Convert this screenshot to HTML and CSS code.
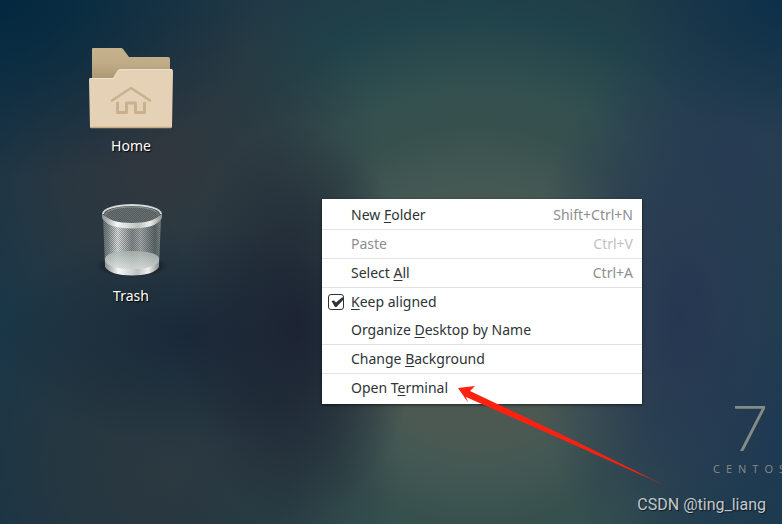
FILE: index.html
```html
<!DOCTYPE html>
<html lang="en">
<head>
    <meta charset="utf-8">
    <title>Desktop</title>
    <link rel="stylesheet" href="styles.css">
</head>
<body>
<div class="desktop">
    <a class="launcher home" href="#home">
        <svg width="88" height="84" viewBox="0 0 88 84">
            <defs>
                <linearGradient id="back" x1="0" y1="0" x2="0" y2="1">
                    <stop offset="0" stop-color="#c5b38e"/>
                    <stop offset=".25" stop-color="#bfac87"/>
                    <stop offset=".55" stop-color="#a99672"/>
                </linearGradient>
            </defs>
            <path d="M5 3q0-1 1-1h28q1 0 2 1l6 8h39q2 0 2 2v50H5z" fill="url(#back)"/>
            <path d="M3 32h23l5-8q1-1 3-1h50q2 0 2 2l-1 56q0 1-2 1H4q-1 0-1-1L2 34q0-2 1-2z" fill="#e4d1b6"/>
            <path d="M3 32.500h23.500l5-8q1-1 3-1H85" fill="none" stroke="#efe0ca"/>
            <path d="M4 81.500h80" stroke="#c6a982" stroke-width="1.500"/>
            <path d="M25 54.500l19-12.500 19 12.500" fill="none" stroke="#c9b190" stroke-width="2.600" stroke-linecap="round" stroke-linejoin="round"/>
            <path d="M30.500 56v10.500h9V57h9v9.500h9V56" fill="none" stroke="#c9b190" stroke-width="3" stroke-linejoin="round"/>
        </svg>
        <span>Home</span>
    </a>
    <a class="launcher trash" href="#trash">
        <svg width="88" height="84" viewBox="0 0 88 84">
            <defs>
                <linearGradient id="can" x1="0" x2="1">
                    <stop offset="0" stop-color="#65716f"/>
                    <stop offset=".1" stop-color="#8d9694"/>
                    <stop offset=".25" stop-color="#dfe2e1"/>
                    <stop offset=".5" stop-color="#858b8b"/>
                    <stop offset=".65" stop-color="#a9adad"/>
                    <stop offset=".9" stop-color="#5d6765"/>
                    <stop offset="1" stop-color="#86918f"/>
                </linearGradient>
                <linearGradient id="rim" x1="0" x2="1">
                    <stop offset="0" stop-color="#8b8f8f"/>
                    <stop offset=".25" stop-color="#f6f6f6"/>
                    <stop offset=".6" stop-color="#bfc1c1"/>
                    <stop offset=".8" stop-color="#efefef"/>
                    <stop offset="1" stop-color="#8b8f8f"/>
                </linearGradient>
                <linearGradient id="floor" x1="0" y1="0" x2="0" y2="1">
                    <stop offset="0" stop-color="#a9b4b1"/>
                    <stop offset="1" stop-color="#e9edeb"/>
                </linearGradient>
                <radialGradient id="shade">
                    <stop offset=".5" stop-color="#080c10" stop-opacity=".7"/>
                    <stop offset="1" stop-color="#080c10" stop-opacity="0"/>
                </radialGradient>
                <pattern id="mesh" width="2" height="2" patternUnits="userSpaceOnUse">
                    <path d="M0 0h1v1H0zM1 1h1v1H1z" fill="#2c3435" opacity=".35"/>
                </pattern>
            </defs>
            <ellipse cx="45" cy="70" rx="37" ry="11" fill="url(#shade)"/>
            <path d="M16 20l2 50q6 8 27 8t27-8l2-50z" fill="url(#can)"/>
            <path d="M16 20l2 50q6 8 27 8t27-8l2-50z" fill="url(#mesh)"/>
            <path d="M18 62q3-7 27-7t27 7v6q-4 7-27 7t-27-7z" fill="url(#floor)" opacity=".8"/>
            <path d="M18 65q5 8 27 8t27-8v6q-6 8.500-27 8.500T18 71z" fill="url(#rim)"/>
            <ellipse cx="45" cy="19" rx="28" ry="9" fill="#697270"/>
            <ellipse cx="45" cy="19" rx="28" ry="9" fill="url(#mesh)"/>
            <path d="M16 18a29 9 0 0 1 58 0" fill="none" stroke="#d6d8d8" stroke-width="2"/>
            <path d="M18.500 19a26.500 8 0 0 1 53 0" fill="none" stroke="#858e8e"/>
            <path d="M15 17v5c4 7 14 10.500 30 10.500S71 29 75 22v-5c-5 7-16 10-30 10s-25-3-30-10z" fill="url(#rim)"/>
        </svg>
        <span>Trash</span>
    </a>

    <div class="brand">
        <div class="version">7</div>
        <div class="distro">CENTOS</div>
    </div>

    <div class="menu">
        <button class="item">
            <span>New <u>F</u>older</span>
            <kbd>Shift+Ctrl+N</kbd>
        </button>
        <hr>
        <button class="item" disabled>
            <span>Paste</span>
            <kbd>Ctrl+V</kbd>
        </button>
        <hr>
        <button class="item">
            <span>Select <u>A</u>ll</span>
            <kbd>Ctrl+A</kbd>
        </button>
        <hr>
        <label class="item check" for="aligned">
            <span class="tick">
                <input type="checkbox" id="aligned" checked>
                <svg width="16" height="16" viewBox="0 0 16 16"><path d="M3.500 7L6 6.500 8 8.500 14 3.500h1V6l-6.500 7H7z" fill="#2e3436"/></svg>
            </span>
            <span><u>K</u>eep aligned</span>
        </label>
        <button class="item"><span>Organize <u>D</u>esktop by Name</span></button>
        <hr>
        <button class="item"><span>Change <u>B</u>ackground</span></button>
        <hr>
        <button class="item"><span>Open T<u>e</u>rminal</span></button>
    </div>

    <svg class="arrow" width="212" height="104" viewBox="0 0 212 104">
        <defs>
            <linearGradient id="tail" x1="0" x2="1">
                <stop offset=".85" stop-color="#ff2010"/>
                <stop offset="1" stop-color="#ff2010" stop-opacity=".2"/>
            </linearGradient>
        </defs>
        <path d="M0 2L17 0l-5 5L113 53 210 101 112 57 8 11l2 5.500z" fill="url(#tail)"/>
    </svg>
    <div class="watermark">CSDN @ting_liang</div>
</div>
</body>
</html>
```

FILE: styles.css
```css
body { margin: 0; font-family: "Noto Sans", sans-serif; font-size: 14px; }

.desktop {
    position: relative;
    min-height: 100vh;
    overflow: hidden;
    background:
        radial-gradient(260px 180px at 0% 0%, #03283f, rgba(3, 40, 63, 0)),
        radial-gradient(160px 140px at 100% 0%, #0d3049, rgba(13, 48, 73, 0)),
        radial-gradient(120px 200px at 38% 62%, rgba(27, 34, 50, .95), rgba(27, 34, 50, .6) 50%, rgba(27, 34, 50, 0)),
        radial-gradient(190px 110px at 24% 64%, rgba(24, 38, 56, .9), rgba(24, 38, 56, 0)),
        radial-gradient(220px 200px at 21% 32%, rgba(50, 54, 61, .95), rgba(48, 54, 61, .6) 50%, rgba(48, 54, 61, 0)),
        radial-gradient(230px 200px at 22% 90%, rgba(44, 56, 64, .95), rgba(40, 54, 62, .7) 50%, rgba(40, 54, 62, 0)),
        radial-gradient(150px 280px at 87% 60%, rgba(36, 52, 82, .9), rgba(38, 55, 82, .6) 50%, rgba(38, 55, 82, 0)),
        radial-gradient(160px 240px at 100% 85%, rgba(27, 58, 84, .9), rgba(27, 58, 84, 0)),
        radial-gradient(150px 180px at 96% 28%, rgba(41, 62, 85, .9), rgba(41, 62, 85, 0)),
        radial-gradient(circle at 61% 62%, #4e5a52 0, #4c5952 110px, #435853 150px, #37504e 200px, #33504f 240px, #20424a 310px, #203a46 380px, #173548 520px);
}

.launcher {
    position: absolute;
    left: 87px;
    width: 88px;
    display: flex;
    flex-direction: column;
    align-items: center;
    gap: 6px;
    color: #fff;
    line-height: 20px;
    text-decoration: none;
    text-shadow: 1px 1px 1px #000;
}
.home { top: 46px; }
.trash { top: 196px; }

.brand {
    position: absolute;
    right: -9px;
    bottom: 47px;
    color: #858b86;
    white-space: nowrap;
}
.version { padding-left: 18px; font-family: Lato, sans-serif; font-size: 64px; font-weight: 300; line-height: 60px; margin-bottom: 4px; }
.distro { font-family: "Open Sans", sans-serif; font-size: 11px; line-height: 16px; letter-spacing: 6px; }

.menu {
    position: absolute;
    left: 322px;
    top: 199px;
    width: 320px;
    box-sizing: border-box;
    padding: 2px 0;
    background: #fff;
    box-shadow: 0 1px 3px rgba(0, 0, 0, .6);
}
.menu hr { height: 1px; margin: 0; border: 0; background: #e2e2e2; }
.item {
    display: flex;
    justify-content: space-between;
    align-items: center;
    width: 100%;
    height: 28px;
    box-sizing: border-box;
    padding: 0 9px 0 29px;
    border: 0;
    background: none;
    color: #2e3436;
    font: inherit;
    line-height: 20px;
}
.item u { text-underline-offset: 2px; }
.item kbd { font: inherit; color: #8b8e8f; }
.item:disabled { color: #8b8e8f; }
.item:disabled kbd { color: #bfc1c1; }

.check { justify-content: flex-start; gap: 7px; padding-left: 6px; }
.tick { display: grid; }
.tick input, .tick svg { grid-area: 1 / 1; }
.tick input {
    appearance: none;
    width: 16px;
    height: 16px;
    margin: 0;
    border: 1px solid #2e3436;
    border-radius: 3px;
}
.tick svg { pointer-events: none; }

.arrow { position: absolute; left: 458px; top: 386px; }

.watermark {
    position: absolute;
    right: 16px;
    bottom: 9px;
    color: #c3c9cf;
    font: 16px/20px Roboto, Arial, sans-serif;
    text-shadow: 1px 1px 1px rgba(0, 0, 0, .6);
}
```
